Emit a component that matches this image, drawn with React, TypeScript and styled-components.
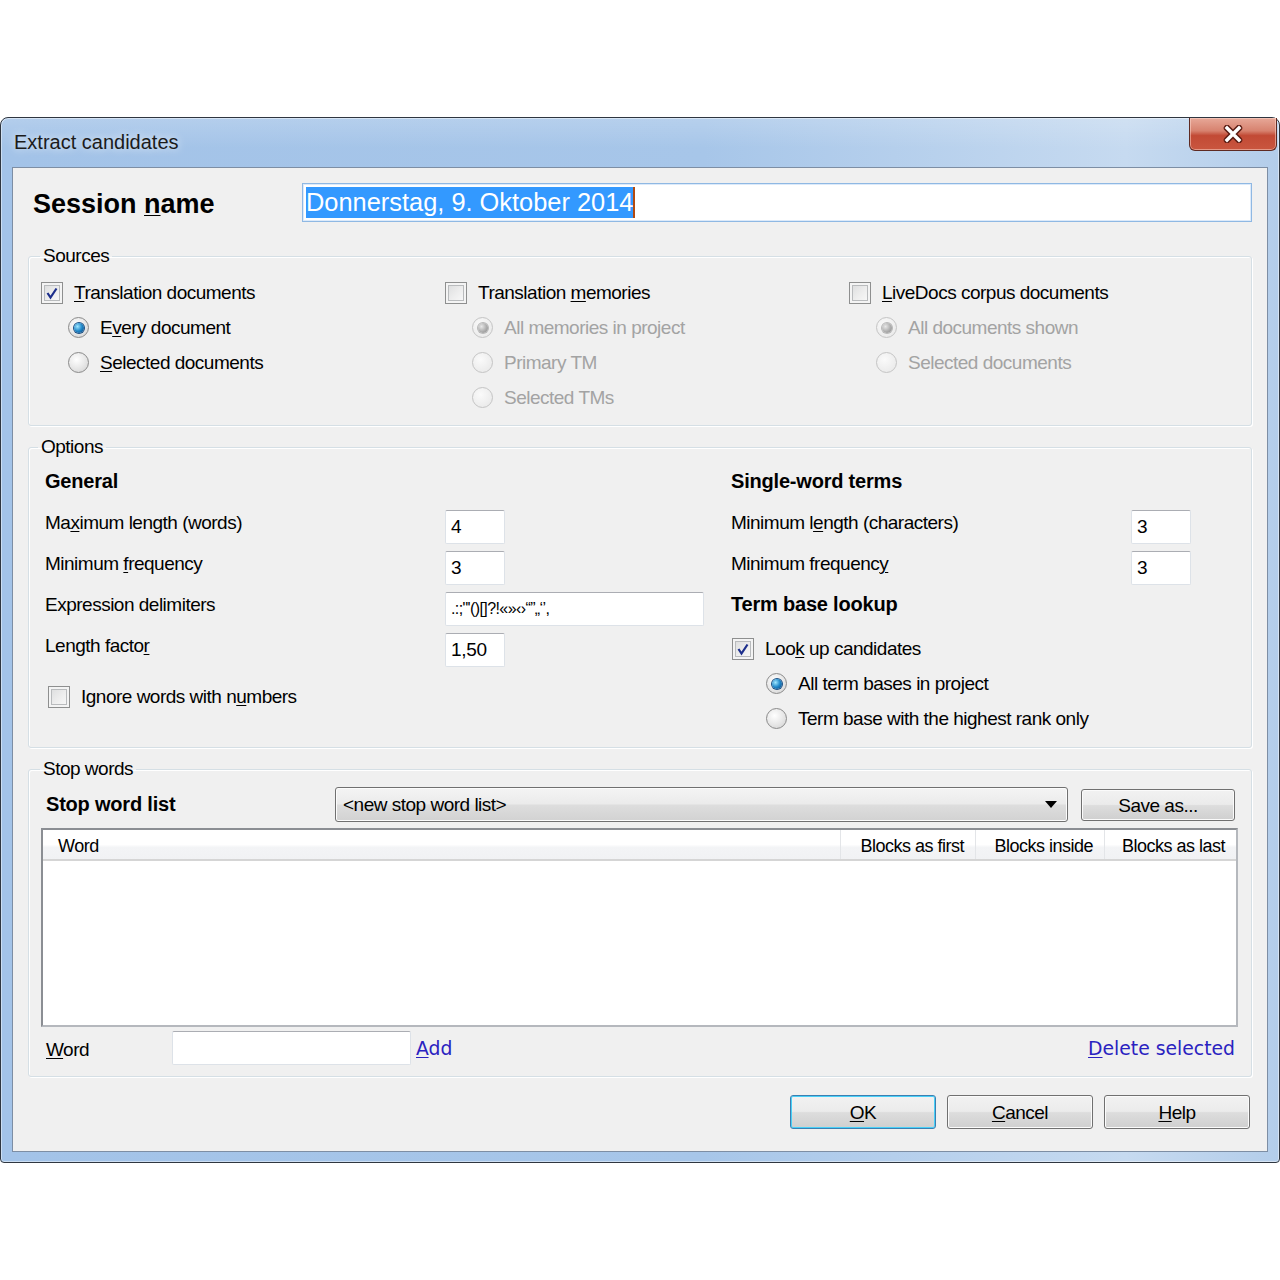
import React from 'react';
import styled, { createGlobalStyle } from 'styled-components';

const GlobalStyle = createGlobalStyle`
  html, body {
    margin: 0;
    padding: 0;
    background: #ffffff;
  }
  body {
    font-family: "Liberation Sans", Arial, sans-serif;
    color: #000;
  }
  * {
    box-sizing: border-box;
  }
`;

const CheckMark = () => (
  <svg width="14" height="14" viewBox="0 0 14 14">
    <path d="M2.5 7 L5.5 11.5 L11.5 2.5" fill="none" stroke="#1d2f8c" strokeWidth="2.2" />
  </svg>
);

const CloseGlyph = () => (
  <svg width="24" height="18" viewBox="0 0 24 18">
    <path d="M6 3 L18 15 M18 3 L6 15" stroke="#5a1b12" strokeWidth="6.5" strokeLinecap="round" />
    <path d="M6 3 L18 15 M18 3 L6 15" stroke="#ffffff" strokeWidth="3.4" strokeLinecap="square" />
  </svg>
);

const CheckBox = ({ checked }: { checked?: boolean }) => (
  <Span_Box>{checked && <CheckMark />}</Span_Box>
);

const Radio = ({ checked, disabled }: { checked?: boolean; disabled?: boolean }) => (
  <Span_Radio $disabled={disabled}>{checked && <Span_Dot $disabled={disabled} />}</Span_Radio>
);

export default function App() {
  return (
    <Div_Page>
      <GlobalStyle />
      <Div_Window>
        <Div_TitleBar>
          <Span_Title>Extract candidates</Span_Title>
          <Div_Close>
            <CloseGlyph />
          </Div_Close>
        </Div_TitleBar>

        <Div_Client>
          <Div_SessionRow>
            <Span_SessionLabel>
              Session <U>n</U>ame
            </Span_SessionLabel>
            <Div_SessionField>
              <Span_Selection>Donnerstag, 9. Oktober 2014</Span_Selection>
              <Span_Caret />
            </Div_SessionField>
          </Div_SessionRow>

          <Fieldset_Group $top={23}>
            <Legend_Group>Sources</Legend_Group>
            <Div_SourcesGrid>
              <Div_Column>
                <Label_Option>
                  <CheckBox checked />
                  <Span_Text>
                    <U>T</U>ranslation documents
                  </Span_Text>
                </Label_Option>
                <Label_Option $indent={27}>
                  <Radio checked />
                  <Span_Text>
                    E<U>v</U>ery document
                  </Span_Text>
                </Label_Option>
                <Label_Option $indent={27}>
                  <Radio />
                  <Span_Text>
                    <U>S</U>elected documents
                  </Span_Text>
                </Label_Option>
              </Div_Column>
              <Div_Column>
                <Label_Option>
                  <CheckBox />
                  <Span_Text>
                    Translation <U>m</U>emories
                  </Span_Text>
                </Label_Option>
                <Label_Option $indent={27}>
                  <Radio checked disabled />
                  <Span_Text $disabled>All memories in project</Span_Text>
                </Label_Option>
                <Label_Option $indent={27}>
                  <Radio disabled />
                  <Span_Text $disabled>Primary TM</Span_Text>
                </Label_Option>
                <Label_Option $indent={27}>
                  <Radio disabled />
                  <Span_Text $disabled>Selected TMs</Span_Text>
                </Label_Option>
              </Div_Column>
              <Div_Column>
                <Label_Option>
                  <CheckBox />
                  <Span_Text>
                    <U>L</U>iveDocs corpus documents
                  </Span_Text>
                </Label_Option>
                <Label_Option $indent={27}>
                  <Radio checked disabled />
                  <Span_Text $disabled>All documents shown</Span_Text>
                </Label_Option>
                <Label_Option $indent={27}>
                  <Radio disabled />
                  <Span_Text $disabled>Selected documents</Span_Text>
                </Label_Option>
              </Div_Column>
            </Div_SourcesGrid>
          </Fieldset_Group>

          <Fieldset_Group $top={10}>
            <Legend_Group $left={9}>Options</Legend_Group>
            <Div_OptionsGrid>
              <Div_Column>
                <Div_Heading>General</Div_Heading>
                <Div_FieldRow>
                  <Span_Text>
                    Ma<U>x</U>imum length (words)
                  </Span_Text>
                  <Input_Box $width={60} defaultValue="4" readOnly />
                </Div_FieldRow>
                <Div_FieldRow>
                  <Span_Text>
                    Minimum <U>f</U>requency
                  </Span_Text>
                  <Input_Box $width={60} defaultValue="3" readOnly />
                </Div_FieldRow>
                <Div_FieldRow>
                  <Span_Text>Expression delimiters</Span_Text>
                  <Input_Box $width={259} $small defaultValue={'.:;"\'()[]?!«»‹›“”„‘’,'} readOnly />
                </Div_FieldRow>
                <Div_FieldRow>
                  <Span_Text>
                    Length facto<U>r</U>
                  </Span_Text>
                  <Input_Box $width={60} defaultValue="1,50" readOnly />
                </Div_FieldRow>
                <Label_Option $indent={3} $top={13}>
                  <CheckBox />
                  <Span_Text>
                    Ignore words with n<U>u</U>mbers
                  </Span_Text>
                </Label_Option>
              </Div_Column>
              <Div_Column>
                <Div_Heading>Single-word terms</Div_Heading>
                <Div_FieldRow>
                  <Span_Text>
                    Minimum l<U>e</U>ngth (characters)
                  </Span_Text>
                  <Input_Box $width={60} defaultValue="3" readOnly />
                </Div_FieldRow>
                <Div_FieldRow>
                  <Span_Text>
                    Minimum frequenc<U>y</U>
                  </Span_Text>
                  <Input_Box $width={60} defaultValue="3" readOnly />
                </Div_FieldRow>
                <Div_FieldRow>
                  <Div_Heading>Term base lookup</Div_Heading>
                </Div_FieldRow>
                <Label_Option $indent={1} $top={6}>
                  <CheckBox checked />
                  <Span_Text>
                    Loo<U>k</U> up candidates
                  </Span_Text>
                </Label_Option>
                <Label_Option $indent={35}>
                  <Radio checked />
                  <Span_Text>All term bases in project</Span_Text>
                </Label_Option>
                <Label_Option $indent={35}>
                  <Radio />
                  <Span_Text>Term base with the highest rank only</Span_Text>
                </Label_Option>
              </Div_Column>
            </Div_OptionsGrid>
          </Fieldset_Group>

          <Fieldset_Group $top={10}>
            <Legend_Group>Stop words</Legend_Group>
            <Div_StopBody>
              <Div_StopRow>
                <Div_Heading>Stop word list</Div_Heading>
                <Div_Combo>
                  <span>&lt;new stop word list&gt;</span>
                  <Span_Arrow />
                </Div_Combo>
                <Button_Push $width={154} $height={32}>
                  Save as...
                </Button_Push>
              </Div_StopRow>
              <Div_ListView>
                <Div_ListHeader>
                  <Div_HeaderCell $grow>Word</Div_HeaderCell>
                  <Div_HeaderCell $width={135}>Blocks as first</Div_HeaderCell>
                  <Div_HeaderCell $width={129}>Blocks inside</Div_HeaderCell>
                  <Div_HeaderCell $width={132}>Blocks as last</Div_HeaderCell>
                </Div_ListHeader>
              </Div_ListView>
              <Div_WordRow>
                <Span_WordLabel>
                  <U>W</U>ord
                </Span_WordLabel>
                <Input_Box $width={239} defaultValue="" readOnly />
                <A_Link>
                  <U>A</U>dd
                </A_Link>
                <Div_Spacer />
                <A_Link>
                  <U>D</U>elete selected
                </A_Link>
              </Div_WordRow>
            </Div_StopBody>
          </Fieldset_Group>

          <Div_ButtonBar>
            <Button_Push $width={146} $height={34} $focused>
              <U>O</U>K
            </Button_Push>
            <Button_Push $width={146} $height={34}>
              <U>C</U>ancel
            </Button_Push>
            <Button_Push $width={146} $height={34}>
              <U>H</U>elp
            </Button_Push>
          </Div_ButtonBar>
        </Div_Client>
      </Div_Window>
    </Div_Page>
  );
}

const Div_Page = styled.div`
  padding-top: 117px;
  width: 1280px;
`;

const Div_Window = styled.div`
  width: 1280px;
  height: 1046px;
  display: flex;
  flex-direction: column;
  border: 1px solid #2f3640;
  border-radius: 8px 8px 4px 4px;
  padding: 0 11px 10px 11px;
  background:
    linear-gradient(180deg, rgba(255, 255, 255, 0.18) 0px, rgba(255, 255, 255, 0) 30px),
    linear-gradient(90deg, #a3c3e8 0%, #a7c6e9 55%, #c6daf0 88%, #b3cdea 100%);
  box-shadow: inset 0 0 0 1px rgba(255, 255, 255, 0.45);
`;

const Div_TitleBar = styled.div`
  height: 49px;
  display: flex;
  align-items: center;
  justify-content: space-between;
  padding-left: 2px;
`;

const Span_Title = styled.span`
  font-family: "Liberation Sans", Arial, sans-serif;
  font-size: 20px;
  color: #1b1b1b;
  text-shadow: 0 0 8px rgba(255, 255, 255, 0.9);
`;

const Div_Close = styled.div`
  align-self: flex-start;
  width: 88px;
  height: 33px;
  margin-right: -9px;
  display: flex;
  align-items: center;
  justify-content: center;
  border: 1px solid #5e2a22;
  border-top: none;
  border-radius: 0 0 6px 6px;
  background: linear-gradient(180deg, #e7a898 0%, #d7826f 40%, #c24a35 55%, #c9563f 100%);
  box-shadow: inset 0 0 0 1px rgba(255, 220, 210, 0.5);
`;

const Div_Client = styled.div`
  flex: 1;
  display: flex;
  flex-direction: column;
  background: #f0f0f0;
  border: 1px solid #7d8ea4;
`;

const U = styled.span`
  text-decoration: underline;
  text-underline-offset: 2px;
  text-decoration-thickness: 1px;
`;

const Div_SessionRow = styled.div`
  display: grid;
  grid-template-columns: 269px 1fr;
  align-items: center;
  margin: 15px 15px 0 20px;
`;

const Span_SessionLabel = styled.span`
  font-size: 27px;
  font-weight: bold;
  margin-top: 3px;
`;

const Div_SessionField = styled.div`
  height: 39px;
  display: flex;
  align-items: center;
  padding-left: 3px;
  background: #ffffff;
  border: 1px solid #8fb8e3;
  box-shadow: inset 0 0 0 1px #dceafa;
`;

const Span_Selection = styled.span`
  font-size: 25.4px;
  line-height: 31px;
  background: #3399ff;
  color: #ffffff;
`;

const Span_Caret = styled.span`
  width: 2px;
  height: 31px;
  background: #b34a10;
`;

const Fieldset_Group = styled.fieldset<{ $top: number }>`
  margin: ${(p) => p.$top}px 15px 0 15px;
  padding: 0;
  min-width: 0;
  border: 1px solid #d5dfe5;
  border-radius: 3px;
  box-shadow: inset 1px 1px 0 #ffffff, 1px 1px 0 #ffffff;
`;

const Legend_Group = styled.legend<{ $left?: number }>`
  margin-left: ${(p) => p.$left ?? 11}px;
  padding: 0 3px;
  font-size: 19px;
  letter-spacing: -0.5px;
  line-height: 22px;
`;

const Div_SourcesGrid = styled.div`
  display: grid;
  grid-template-columns: 404px 404px 1fr;
  padding: 8px 0 10px 12px;
`;

const Div_Column = styled.div`
  display: flex;
  flex-direction: column;
`;

const Label_Option = styled.label<{ $indent?: number; $top?: number }>`
  height: 35px;
  display: flex;
  align-items: center;
  gap: 11px;
  padding-left: ${(p) => p.$indent ?? 0}px;
  margin-top: ${(p) => p.$top ?? 0}px;
`;

const Span_Text = styled.span<{ $disabled?: boolean }>`
  font-size: 19px;
  letter-spacing: -0.5px;
  white-space: nowrap;
  color: ${(p) => (p.$disabled ? '#a3a3a3' : '#000000')};
`;

const Span_Box = styled.span`
  width: 22px;
  height: 22px;
  flex: none;
  display: flex;
  align-items: center;
  justify-content: center;
  border: 1px solid #8e8f8f;
  background: linear-gradient(135deg, #d9dadb 0%, #eeeeee 55%, #fbfbfb 100%);
  box-shadow: inset 0 0 0 2px #f4f4f4, inset 0 0 0 3px #b9bbbd;
`;

const Span_Radio = styled.span<{ $disabled?: boolean }>`
  width: 21px;
  height: 21px;
  flex: none;
  display: flex;
  align-items: center;
  justify-content: center;
  border-radius: 50%;
  border: 1px solid ${(p) => (p.$disabled ? '#c4c4c4' : '#8a8a8a')};
  background: ${(p) =>
    p.$disabled
      ? 'radial-gradient(circle at 40% 35%, #fafafa 0%, #ececec 70%)'
      : 'radial-gradient(circle at 40% 35%, #ffffff 0%, #e6e6e6 55%, #cfcfcf 100%)'};
`;

const Span_Dot = styled.span<{ $disabled?: boolean }>`
  width: 10px;
  height: 10px;
  border-radius: 50%;
  background: ${(p) =>
    p.$disabled
      ? 'radial-gradient(circle at 35% 35%, #e8e8e8 0%, #a8a8a8 60%, #8c8c8c 100%)'
      : 'radial-gradient(circle at 35% 35%, #9fe6ff 0%, #1e86c8 50%, #0b3f78 100%)'};
  box-shadow: 0 0 0 1px ${(p) => (p.$disabled ? '#b8b8b8' : '#1a4f84')};
`;

const Div_OptionsGrid = styled.div`
  display: grid;
  grid-template-columns: 686px 1fr;
  padding: 8px 0 11px 16px;
`;

const Div_Heading = styled.div`
  height: 30px;
  margin-bottom: 6px;
  display: flex;
  align-items: center;
  font-size: 20px;
  font-weight: bold;
  letter-spacing: -0.2px;
  white-space: nowrap;
`;

const Input_Box = styled.input<{ $width: number; $small?: boolean }>`
  width: ${(p) => p.$width}px;
  height: 34px;
  padding: 0 5px;
  font-family: "Liberation Sans", Arial, sans-serif;
  font-size: ${(p) => (p.$small ? 16 : 19)}px;
  letter-spacing: ${(p) => (p.$small ? -0.6 : -0.3)}px;
  color: #000;
  background: #ffffff;
  border: 1px solid #dde2e8;
  border-top-color: #abadb3;
  border-radius: 2px;
  outline: none;
`;

const Div_FieldRow = styled.div`
  height: 41px;
  display: grid;
  grid-template-columns: 400px auto;
  align-items: center;
  justify-content: start;

  & > ${Div_Heading} {
    margin: 0;
  }

  & > ${Input_Box} {
    margin-top: 8px;
  }
`;

const Div_StopBody = styled.div`
  padding: 7px 12px 11px 12px;
`;

const Div_StopRow = styled.div`
  height: 35px;
  display: grid;
  grid-template-columns: 289px 1fr 154px;
  align-items: center;
  padding: 0 4px 0 5px;

  & > ${Div_Heading} {
    margin: 0;
  }
`;

const Div_Combo = styled.div`
  height: 35px;
  margin-right: 13px;
  display: flex;
  align-items: center;
  justify-content: space-between;
  padding: 0 10px 0 7px;
  font-size: 19px;
  letter-spacing: -0.5px;
  border: 1px solid #707070;
  border-radius: 3px;
  background: linear-gradient(180deg, #f4f4f4 0%, #ebebeb 48%, #dddddd 52%, #d2d2d2 100%);
  box-shadow: inset 0 0 0 1px #fcfcfc;
`;

const Span_Arrow = styled.span`
  width: 0;
  height: 0;
  border-left: 6px solid transparent;
  border-right: 6px solid transparent;
  border-top: 7px solid #000;
`;

const Button_Push = styled.button<{ $width: number; $height: number; $focused?: boolean }>`
  width: ${(p) => p.$width}px;
  height: ${(p) => p.$height}px;
  padding: 2px 0 0 0;
  font-family: "Liberation Sans", Arial, sans-serif;
  font-size: 19px;
  letter-spacing: -0.5px;
  color: #000;
  border: 1px solid ${(p) => (p.$focused ? '#3c7fb1' : '#707070')};
  border-radius: 3px;
  background: linear-gradient(180deg, #f2f2f2 0%, #ebebeb 48%, #dddddd 52%, #cfcfcf 100%);
  box-shadow: inset 0 0 0 1px ${(p) => (p.$focused ? '#48d0f8' : '#fbfbfb')};
`;

const Div_ListView = styled.div`
  height: 199px;
  margin: 6px 1px 0 0;
  background: #ffffff;
  border: 2px solid #8b8e93;
  border-right-color: #b5b8bd;
  border-bottom-color: #b5b8bd;
`;

const Div_ListHeader = styled.div`
  height: 31px;
  display: flex;
  background: linear-gradient(180deg, #ffffff 0%, #ffffff 50%, #f3f4f6 60%, #f1f2f4 100%);
  border-bottom: 2px solid #d5d5d5;
`;

const Div_HeaderCell = styled.div<{ $grow?: boolean; $width?: number }>`
  flex: ${(p) => (p.$grow ? '1' : 'none')};
  width: ${(p) => (p.$width ? `${p.$width}px` : 'auto')};
  display: flex;
  align-items: center;
  justify-content: ${(p) => (p.$grow ? 'flex-start' : 'flex-end')};
  padding: ${(p) => (p.$grow ? '4px 0 0 15px' : '4px 11px 0 0')};
  font-size: 18px;
  letter-spacing: -0.5px;
  white-space: nowrap;
  border-left: ${(p) => (p.$grow ? 'none' : '1px solid #e3e5e8')};
`;

const Div_WordRow = styled.div`
  height: 34px;
  margin-top: 4px;
  display: flex;
  align-items: center;
  gap: 5px;
  padding: 0 4px 0 5px;
`;

const Span_WordLabel = styled.span`
  width: 121px;
  font-size: 19px;
  letter-spacing: -0.5px;
  margin-top: 4px;
`;

const A_Link = styled.a`
  font-family: "DejaVu Sans", Verdana, sans-serif;
  font-size: 18.8px;
  color: #2a22c0;
  cursor: pointer;
`;

const Div_Spacer = styled.div`
  flex: 1;
`;

const Div_ButtonBar = styled.div`
  display: flex;
  justify-content: flex-end;
  gap: 11px;
  margin: 18px 17px 0 0;
`;
